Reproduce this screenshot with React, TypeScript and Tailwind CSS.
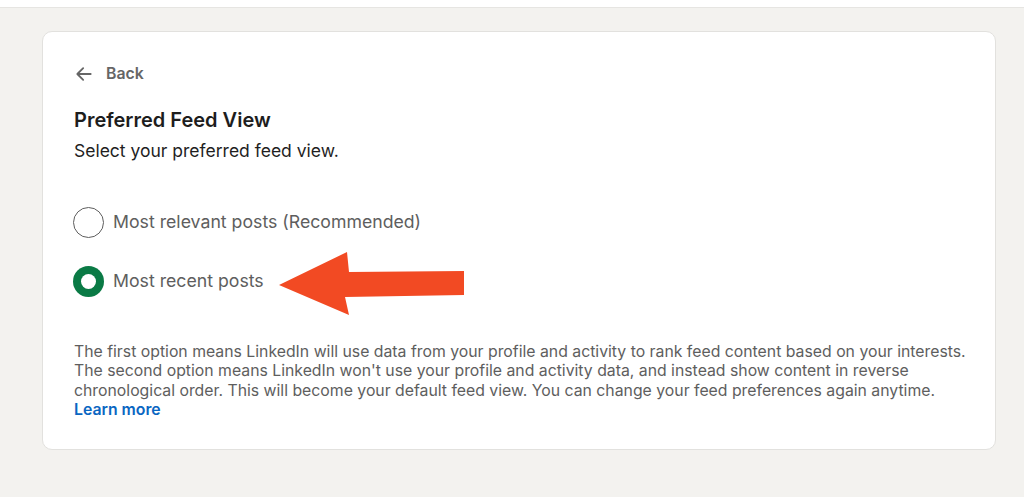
import React from "react";

export default function App() {
  return (
    <div className="w-[1024px] h-[497px] bg-[#f3f2ef] overflow-hidden" style={{ fontFamily: 'Inter, "Noto Sans", sans-serif' }}>
      <div className="h-[8px] bg-white border-b border-[#e6e5e2]" />
      <div className="pt-[23px] pl-[42px] pr-[28px]">
        <div className="bg-white rounded-[10px] border border-[#e2e1de] h-[419px] pl-[31px] pr-[24px] pt-[32px]">
          <div className="flex items-center gap-[12px] text-[#666666] h-[20px]">
            <svg width="20" height="20" viewBox="0 0 24 24" fill="none" stroke="#666666" strokeWidth="2.2" strokeLinecap="round" strokeLinejoin="round">
              <path d="M20 12H5" />
              <path d="M11 5l-7 7 7 7" />
            </svg>
            <span className="text-[15.8px] font-semibold">Back</span>
          </div>
          <h1 className="mt-[24px] text-[20px] font-semibold text-[#1d1d1d] leading-[24px]">Preferred Feed View</h1>
          <p className="mt-[8px] text-[17.5px] text-[#1f1f1f] leading-[22px]">Select your preferred feed view.</p>
          <div className="mt-[45px] flex flex-col gap-[28px]">
            <div className="flex items-center gap-[9px] h-[31px] -ml-[1px]">
              <div className="w-[31px] h-[31px] rounded-full border-[1.5px] border-[#5e5e5e]" />
              <span className="text-[17.7px] text-[#5e5e5e]">Most relevant posts (Recommended)</span>
            </div>
            <div className="flex items-center gap-[9px] h-[31px] -ml-[1px] relative">
              <div className="w-[31px] h-[31px] rounded-full bg-[#0a7a45] flex items-center justify-center">
                <div className="w-[15px] h-[15px] rounded-full bg-white" />
              </div>
              <span className="text-[17.7px] text-[#5e5e5e]">Most recent posts</span>
              <svg className="absolute left-[206px] top-[-15px]" width="188" height="66" viewBox="0 0 188 66">
                <polygon points="0,34 68,1 70,21 185,20 185,44 66,46 70,64" fill="#f24a23" />
              </svg>
            </div>
          </div>
          <div className="mt-[45px] text-[15.8px] leading-[19.4px] text-[#5e5e5e] whitespace-nowrap">
            <p>
              The first option means LinkedIn will use data from your profile and activity to rank feed content based on your interests.
              <br />
              The second option means LinkedIn won't use your profile and activity data, and instead show content in reverse
              <br />
              chronological order. This will become your default feed view. You can change your feed preferences again anytime.
            </p>
            <a className="font-semibold text-[#0a66c2]">Learn more</a>
          </div>
        </div>
      </div>
    </div>
  );
}
